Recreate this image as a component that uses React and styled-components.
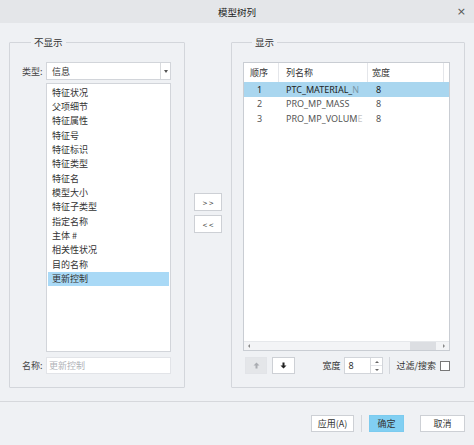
import React from "react";
import styled, { createGlobalStyle } from "styled-components";

const Global = createGlobalStyle`
  html, body { margin: 0; padding: 0; }
  body {
    width: 474px; height: 445px; overflow: hidden;
    background: #eff1f4;
    font-family: "Noto Sans CJK SC", "Noto Sans", sans-serif;
    font-size: 9px; color: #333;
  }
  * { box-sizing: border-box; }
`;

const Dialog = styled.div`
  width: 474px; height: 445px;
  display: flex; flex-direction: column;
  background: #eff1f4;
`;

const TitleBar = styled.div`
  height: 23px; flex: none;
  background: #e4e6e9;
  display: flex; align-items: center; justify-content: center;
  position: relative;
  font-size: 9.5px; color: #222;
`;

const Close = styled.span`
  position: absolute; right: 8px; top: 5px;
  font-size: 11px; color: #555;
  font-family: "DejaVu Sans", sans-serif;
`;

const Main = styled.div`
  flex: 1;
  display: flex;
  padding: 13px 9px 13px 9px;
  border-bottom: 1px solid #d6d8dc;
`;

const Group = styled.fieldset`
  margin: 0;
  width: ${(p) => p.$w}px;
  border: 1px solid #d3d6db;
  border-radius: 1px;
  padding: ${(p) => p.$pad};
  display: flex; flex-direction: column;
  min-width: 0;
`;

const Legend = styled.legend`
  padding: 0 3px;
  margin-left: 9px;
  font-size: 9.5px;
  line-height: 12px;
  color: #333;
`;

const FormRow = styled.div`
  display: flex; align-items: center;
  height: ${(p) => p.$h}px;
`;

const Label = styled.span`
  width: 24px; flex: none;
  color: #444;
  white-space: nowrap;
`;

const Combo = styled.div`
  flex: 1; height: 100%;
  background: #fff;
  border: 1px solid #d2d5da;
  display: flex; align-items: center;
`;

const ComboText = styled.span`
  flex: 1; padding-left: 5px;
`;

const ComboArrow = styled.span`
  width: 10px; height: 100%;
  border-left: 1px solid #d8dadd;
  display: flex; align-items: center; justify-content: center;
  &::after {
    content: ""; width: 0; height: 0;
    border-left: 2.5px solid transparent;
    border-right: 2.5px solid transparent;
    border-top: 3px solid #555;
  }
`;

const ListBox = styled.div`
  margin: 3px 0 5px 24px;
  height: 269px;
  background: #fff;
  border: 1px solid #d2d5da;
  padding: 1.5px 1px 0 1px;
  display: flex; flex-direction: column;
`;

const ListItem = styled.div`
  height: 14.35px; line-height: 14.35px;
  padding-left: 4px;
  background: ${(p) => (p.$sel ? "#a9d9f6" : "transparent")};
  white-space: nowrap;
`;

const TextInput = styled.div`
  flex: 1; height: 100%;
  background: #fff;
  border: 1px solid #e2e4e8;
  display: flex; align-items: center;
  padding-left: 2px;
  color: ${(p) => (p.$placeholder ? "#b0b3b8" : "#333")};
`;

const Middle = styled.div`
  width: 46px; flex: none;
  display: flex; flex-direction: column; align-items: center;
  padding-top: 157px; gap: 4px;
`;

const Btn = styled.button`
  font-family: inherit; font-size: ${(p) => p.$fs || 9}px;
  width: ${(p) => p.$w}px; height: ${(p) => p.$h || 18}px;
  padding: 0; margin: 0;
  border: 1px solid ${(p) => (p.$primary ? "#7ccbef" : p.$disabled ? "#e2e4e8" : "#cdd0d5")};
  background: ${(p) => (p.$primary ? "#81cff2" : p.$disabled ? "#e4e6e9" : "#fff")};
  color: ${(p) => (p.$disabled ? "#a8abb0" : "#333")};
  display: flex; align-items: center; justify-content: center;
  flex: none;
`;

const Table = styled.div`
  height: 289px;
  background: #fff;
  border: 1px solid #c9cdd3;
  display: flex; flex-direction: column;
`;

const HeaderRow = styled.div`
  display: flex; height: 19px; flex: none;
  align-items: center;
`;

const HeadCell = styled.div`
  width: ${(p) => p.$w}px; flex: none; height: 100%;
  padding-left: ${(p) => p.$pl}px;
  border-right: ${(p) => (p.$last ? "none" : "1px solid #e4e6ea")};
  display: flex; align-items: center;
  color: #333;
`;

const Rows = styled.div`
  flex: 1;
`;

const Row = styled.div`
  display: flex; height: 14.5px; align-items: center;
  background: ${(p) => (p.$sel ? "#a9d6ef" : "transparent")};
`;

const Cell = styled.div`
  width: ${(p) => p.$w}px; flex: none;
  padding-left: ${(p) => p.$pl}px;
  padding-right: 3px;
  overflow: hidden; white-space: nowrap;
  font-family: "Noto Sans", "Noto Sans CJK SC", sans-serif;
  font-size: 9px;
  color: ${(p) => (p.$sel ? "#222" : "#555")};
`;

const Faded = styled.span`
  opacity: 0.35;
`;

const HScroll = styled.div`
  height: 9px; flex: none;
  border-top: 1px solid #e6e8eb;
  background: #f3f4f6;
  display: flex; align-items: center;
`;

const ScrollArrow = styled.span`
  width: 10px; height: 100%; flex: none;
  display: flex; align-items: center; justify-content: center;
  &::after {
    content: ""; width: 0; height: 0;
    border-top: 2px solid transparent;
    border-bottom: 2px solid transparent;
    ${(p) => (p.$dir === "left" ? "border-right: 2px solid #888;" : "border-left: 2px solid #888;")}
  }
`;

const Track = styled.div`
  flex: 1; height: 100%;
  display: flex; justify-content: flex-end;
  padding-right: 3px;
`;

const Thumb = styled.div`
  width: 26px; height: 100%;
  background: #dcdee2;
`;

const Controls = styled.div`
  display: flex; align-items: center;
  height: 17px; margin-top: 6px;
  padding-left: 2px;
`;

const Gap = styled.span`
  flex: none; width: ${(p) => p.$w}px;
`;

const Spacer = styled.div`flex: 1;`;

const Spin = styled.div`
  display: flex; height: 17px;
  border: 1px solid #d2d5da;
  background: #fff;
  margin-left: 4px;
`;

const SpinValue = styled.div`
  width: 25px;
  padding-left: 3px;
  display: flex; align-items: center;
  font-family: "Noto Sans", sans-serif;
`;

const SpinButtons = styled.div`
  width: 12px;
  border-left: 1px solid #d8dadd;
  display: flex; flex-direction: column;
`;

const SpinBtn = styled.span`
  flex: 1;
  display: flex; align-items: center; justify-content: center;
  &:first-child { border-bottom: 1px solid #e2e4e8; }
  &::after {
    content: ""; width: 0; height: 0;
    border-left: 2px solid transparent;
    border-right: 2px solid transparent;
    ${(p) => (p.$up ? "border-bottom: 2.5px solid #666;" : "border-top: 2.5px solid #666;")}
  }
`;

const VSep = styled.span`
  width: 1px; height: 17px; background: #d3d6db;
  margin: 0 ${(p) => p.$m || 6}px;
  flex: none;
`;

const Check = styled.span`
  width: 10px; height: 10px;
  border: 1px solid #777;
  background: #fff;
  margin-left: 4px;
  flex: none;
`;

const Footer = styled.div`
  height: 43px; flex: none;
  display: flex; align-items: center; justify-content: flex-end;
  padding: 0 9px 0 0;
`;

const Arrow = ({ up }) => (
  <svg width="7" height="7" viewBox="0 0 7 7">
    {up ? (
      <path d="M3.5 0.5 L6.5 3.5 L4.5 3.5 L4.5 6.5 L2.5 6.5 L2.5 3.5 L0.5 3.5 Z" fill="#a9acb1" />
    ) : (
      <path d="M3.5 6.5 L6.5 3.5 L4.5 3.5 L4.5 0.5 L2.5 0.5 L2.5 3.5 L0.5 3.5 Z" fill="#222" />
    )}
  </svg>
);

const items = [
  "特征状况", "父项细节", "特征属性", "特征号", "特征标识", "特征类型", "特征名",
  "模型大小", "特征子类型", "指定名称", "主体 #", "相关性状况", "目的名称", "更新控制",
];

const rows = [
  ["1", "PTC_MATERIAL_", "N", "8"],
  ["2", "PRO_MP_MASS", "", "8"],
  ["3", "PRO_MP_VOLUM", "E", "8"],
];

export default function App() {
  return (
    <Dialog>
      <Global />
      <TitleBar>
        模型树列
        <Close>×</Close>
      </TitleBar>
      <Main>
        <Group $w={176} $pad="14px 13px 13px 12px">
          <Legend>不显示</Legend>
          <FormRow $h={18}>
            <Label>类型:</Label>
            <Combo>
              <ComboText>信息</ComboText>
              <ComboArrow />
            </Combo>
          </FormRow>
          <ListBox>
            {items.map((t, i) => (
              <ListItem key={t} $sel={i === items.length - 1}>{t}</ListItem>
            ))}
          </ListBox>
          <FormRow $h={17}>
            <Label>名称:</Label>
            <TextInput $placeholder>更新控制</TextInput>
          </FormRow>
        </Group>
        <Middle>
          <Btn $w={28} $fs={8}>&gt; &gt;</Btn>
          <Btn $w={28} $fs={8}>&lt; &lt;</Btn>
        </Middle>
        <Group $w={234} $pad="14px 14px 13px 11px">
          <Legend>显示</Legend>
          <Table>
            <HeaderRow>
              <HeadCell $w={35} $pl={6}>顺序</HeadCell>
              <HeadCell $w={89} $pl={7}>列名称</HeadCell>
              <HeadCell $w={76} $pl={4}>宽度</HeadCell>
              <HeadCell $w={5} $pl={0} $last />
            </HeaderRow>
            <Rows>
              {rows.map((r, i) => (
                <Row key={r[0]} $sel={i === 0}>
                  <Cell $w={35} $pl={13} $sel={i === 0}>{r[0]}</Cell>
                  <Cell $w={89} $pl={7} $sel={i === 0}>
                    {r[1]}
                    {r[2] && <Faded>{r[2]}</Faded>}
                  </Cell>
                  <Cell $w={76} $pl={8} $sel={i === 0}>{r[3]}</Cell>
                </Row>
              ))}
            </Rows>
            <HScroll>
              <ScrollArrow $dir="left" />
              <Track><Thumb /></Track>
              <ScrollArrow $dir="right" />
            </HScroll>
          </Table>
          <Controls>
            <Btn $w={22} $h={17} $disabled><Arrow up /></Btn>
            <Gap $w={5} />
            <Btn $w={23} $h={17}><Arrow /></Btn>
            <Spacer />
            <span>宽度</span>
            <Spin>
              <SpinValue>8</SpinValue>
              <SpinButtons>
                <SpinBtn $up />
                <SpinBtn />
              </SpinButtons>
            </Spin>
            <VSep $m={6} />
            <span>过滤/搜索</span>
            <Check />
          </Controls>
        </Group>
      </Main>
      <Footer>
        <Btn $w={43} $h={17}>应用(A)</Btn>
        <VSep $m={7} />
        <Btn $w={35} $h={17} $primary>确定</Btn>
        <Gap $w={16} />
        <Btn $w={45} $h={17}>取消</Btn>
      </Footer>
    </Dialog>
  );
}
